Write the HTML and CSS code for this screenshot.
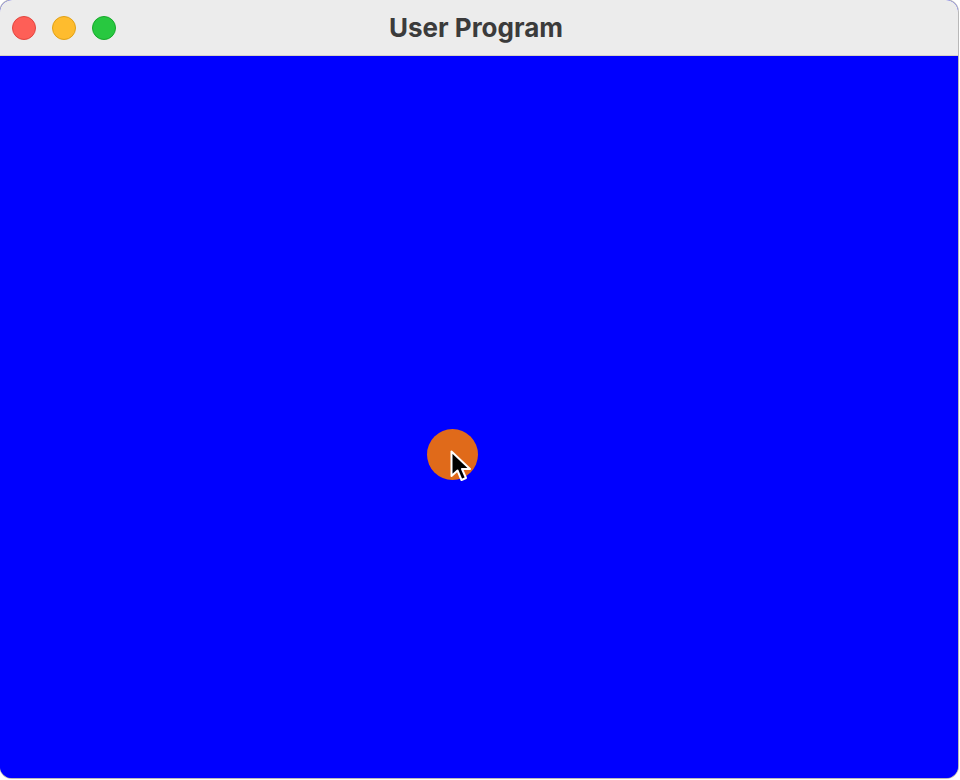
FILE: index.html
```html
<!DOCTYPE html>
<html>
<head>
<meta charset="utf-8">
<link rel="stylesheet" href="styles.css">
</head>
<body>
<div class="window">
  <div class="titlebar">
    <div class="lights">
      <span class="light red"></span>
      <span class="light yellow"></span>
      <span class="light green"></span>
    </div>
    <div class="title">User Program</div>
  </div>
  <div class="canvas">
    <div class="ball"></div>
    <svg class="cursor" width="26" height="36" viewBox="0 0 26 36">
      <path d="M1.5 1.5 L1.5 26 L7.5 20.5 L11.5 30 L16 28 L12 19 L20 19 Z" fill="#000" stroke="#fff" stroke-width="2" stroke-linejoin="round"/>
    </svg>
  </div>
</div>
</body>
</html>
```
FILE: styles.css
```css
html, body {
  margin: 0;
  padding: 0;
  width: 960px;
  height: 780px;
  background: #ffffff;
  overflow: hidden;
}
.window {
  width: 958px;
  height: 778px;
  border-radius: 12px;
  overflow: hidden;
  display: flex;
  flex-direction: column;
  box-shadow: 0 0 0 1px #b8b8b8;
  background: #0000ff;
}
.titlebar {
  height: 55px;
  background: #ececec;
  border-bottom: 1px solid #d6d2c6;
  position: relative;
  display: flex;
  align-items: center;
  justify-content: center;
  flex-shrink: 0;
}
.lights {
  position: absolute;
  left: 12px;
  top: 16px;
  display: flex;
  gap: 16px;
}
.light {
  width: 24px;
  height: 24px;
  border-radius: 50%;
  box-sizing: border-box;
}
.red { background: #fe5f57; border: 1px solid #e2463f; }
.yellow { background: #febc2e; border: 1px solid #e1a116; }
.green { background: #28c840; border: 1px solid #17a92a; }
.title {
  font-family: "Inter", "Liberation Sans", sans-serif;
  font-weight: 700;
  font-size: 26px;
  color: #3b3b3b;
  margin-left: -6px;
}
.canvas {
  flex: 1;
  background: #0000ff;
  position: relative;
}
.ball {
  position: absolute;
  left: 427px;
  top: 373px;
  width: 51px;
  height: 51px;
  border-radius: 50%;
  background: #e06a1a;
}
.cursor {
  position: absolute;
  left: 450px;
  top: 394px;
}
```
